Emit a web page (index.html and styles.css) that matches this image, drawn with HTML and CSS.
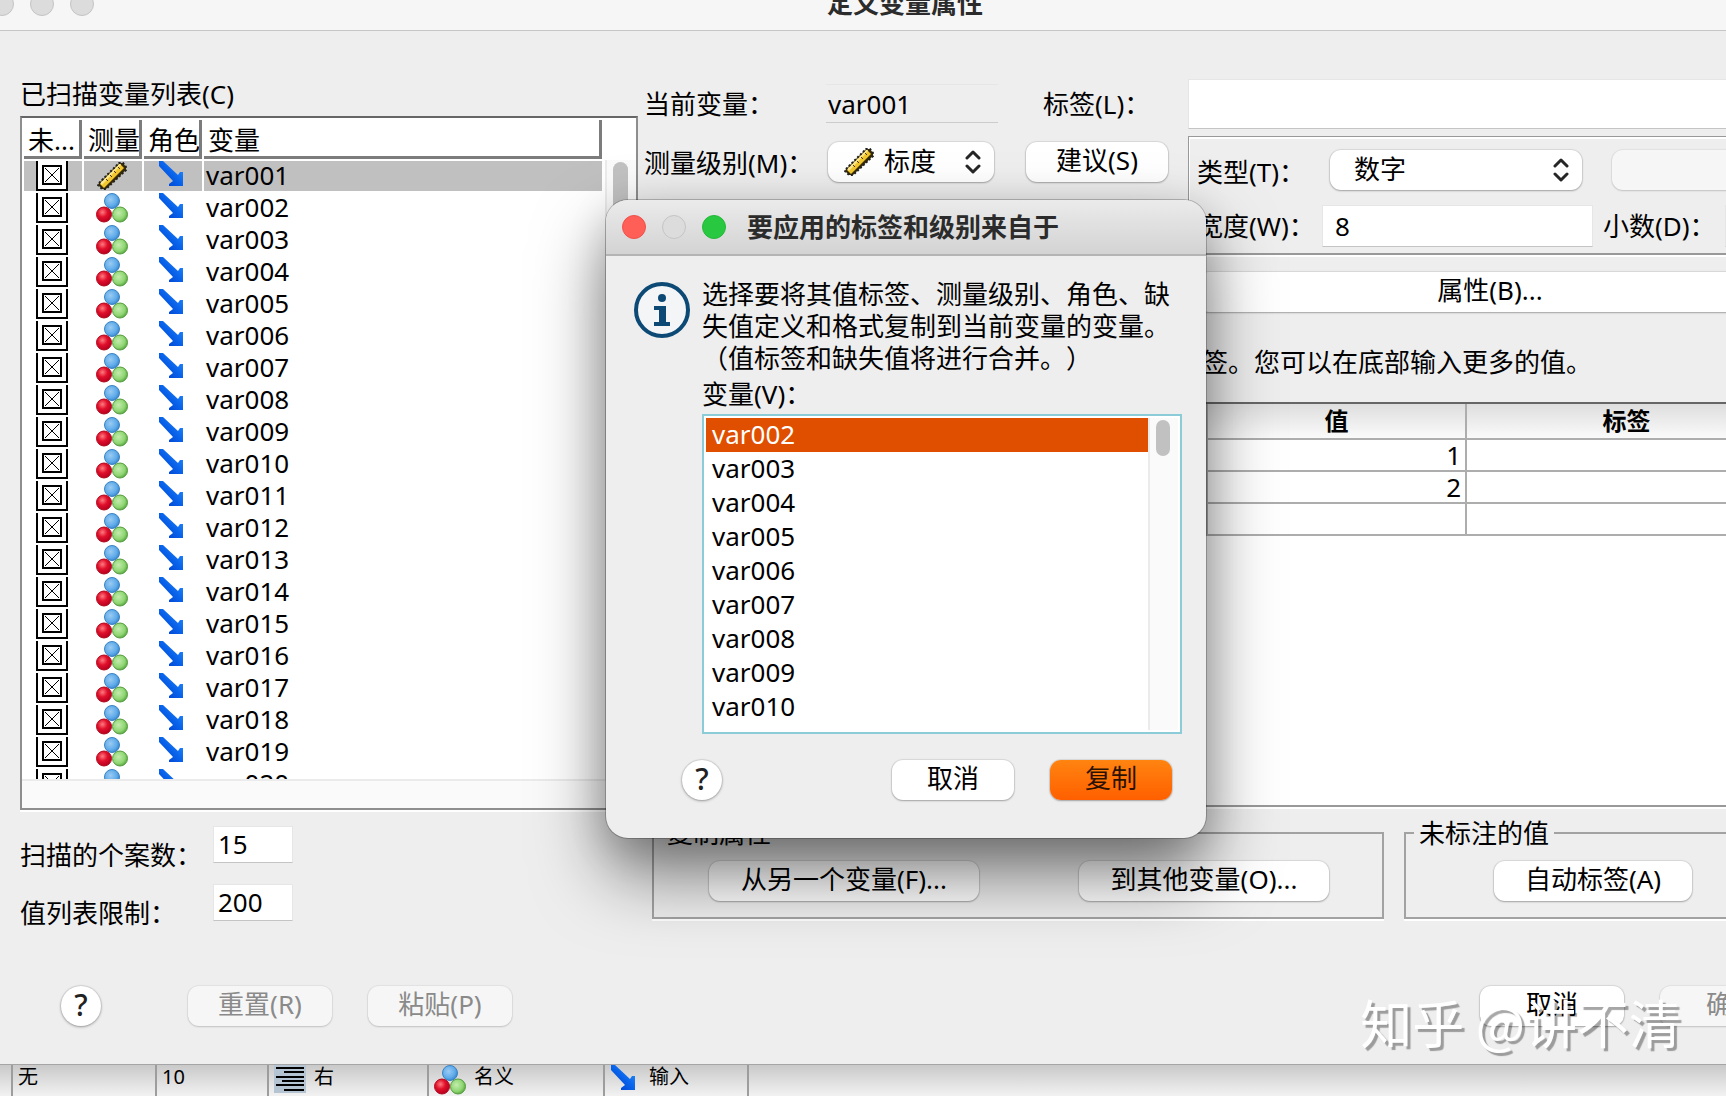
FILE: index.html
```html
<!DOCTYPE html>
<html lang="zh-CN">
<head>
<meta charset="utf-8">
<title>定义变量属性</title>
<link rel="stylesheet" href="styles.css">
</head>
<body>
<svg class="sprites" aria-hidden="true">
  <defs>
    <radialGradient id="blue" cx=".4" cy=".4" r=".6"><stop offset="0" stop-color="#9bcbf3"/><stop offset=".7" stop-color="#5fabea"/><stop offset="1" stop-color="#3d8bd0"/></radialGradient>
    <radialGradient id="red" cx=".4" cy=".35" r=".65"><stop offset="0" stop-color="#ff7a80"/><stop offset=".5" stop-color="#e0102a"/><stop offset="1" stop-color="#b80020"/></radialGradient>
    <radialGradient id="green" cx=".4" cy=".4" r=".6"><stop offset="0" stop-color="#c4ecae"/><stop offset=".7" stop-color="#8fd672"/><stop offset="1" stop-color="#5fae46"/></radialGradient>
    <linearGradient id="shaft" x1="0" y1="1" x2="1" y2="0"><stop offset="0" stop-color="#0038c4"/><stop offset=".5" stop-color="#0862ea"/><stop offset="1" stop-color="#2f95ff"/></linearGradient>
    <symbol id="nominal" viewBox="0 0 32 30">
      <circle cx="16" cy="8" r="7.5" fill="url(#blue)" stroke="#3a83c4"/>
      <circle cx="8" cy="21.500" r="7.500" fill="url(#red)" stroke="#b30a20"/>
      <circle cx="24" cy="21.500" r="7.500" fill="url(#green)" stroke="#569c40"/>
    </symbol>
    <symbol id="arrow" viewBox="0 0 26 26">
      <path d="M1 0h4l15 14 2-3h3v14H11v-2l4-3L1 5z" fill="url(#shaft)"/>
    </symbol>
    <symbol id="ruler" viewBox="0 0 30 30">
      <path d="M2 22 22 2h4l3 4v3L9 28H5l-4-4z" fill="#3a2c00"/>
      <path d="M3 23 23 3l4 4L7 27z" fill="#f2c62e"/>
      <path d="M3 22 23 2l1 2L5 24z" fill="#ffe88a"/>
      <path d="M2 22 22 2h4l3 4v3L9 28H5l-4-4z" fill="none" stroke="#222" stroke-width="2" stroke-dasharray="2 2"/>
      <path d="m9 18 2 2m2-6 2 2m2-6 2 2m2-6 2 2" stroke="#4a3800" stroke-width="1"/>
    </symbol>
    <symbol id="chevrons" viewBox="0 0 18 24">
      <path d="m3 8 6-6 6 6M3 16l6 6 6-6" fill="none" stroke="#262626" stroke-width="3" stroke-linecap="round" stroke-linejoin="round"/>
    </symbol>
  </defs>
</svg>

<main class="window">
  <header class="titlebar">
    <span class="light"></span><span class="light"></span><span class="light"></span>
    <h1 class="titlebar-text">定义变量属性</h1>
  </header>

  <div class="content">
    <section class="scanned">
      <h2 class="label">已扫描变量列表(C)</h2>
      <div class="listbox">
        <div class="listbox-view">
          <div class="listbox-rows">
            <table class="vars">
              <colgroup><col class="col-icon"><col class="col-icon"><col class="col-icon"><col></colgroup>
              <thead><tr><th>未...</th><th>测量</th><th>角色</th><th>变量</th></tr></thead>
              <tbody id="vars"></tbody>
            </table>
          </div>
          <div class="vscroll"><span class="thumb thumb-long"></span></div>
        </div>
        <div class="hscroll"></div>
      </div>
      <div class="limit"><label for="cases">扫描的个案数：</label><input id="cases" class="field" value="15"></div>
      <div class="limit"><label for="limit">值列表限制：</label><input id="limit" class="field" value="200"></div>
    </section>

    <section class="details">
      <div class="details-top">
        <div class="current">
          <div class="row row-name">
            <label class="current-label" for="current">当前变量：</label>
            <input id="current" class="readonly" value="var001" readonly>
            <label for="label">标签(L)：</label>
          </div>
          <div class="row row-level">
            <label class="current-label" for="level">测量级别(M)：</label>
            <div class="dropdown dropdown-level">
              <svg class="dropdown-icon"><use href="#ruler"/></svg>
              <select id="level"><option>标度</option></select>
              <svg class="dropdown-arrows"><use href="#chevrons"/></svg>
            </div>
            <button class="btn btn-m">建议(S)</button>
          </div>
        </div>
        <div class="format-side">
          <input id="label" class="field label-field">
          <div class="format">
            <div class="row">
              <label class="type-label" for="type">类型(T)：</label>
              <div class="dropdown dropdown-type">
                <select id="type"><option>数字</option></select>
                <svg class="dropdown-arrows"><use href="#chevrons"/></svg>
              </div>
              <button class="btn btn-format" disabled aria-label="格式"></button>
            </div>
            <div class="row">
              <label class="width-label" for="width">宽度(W)：</label>
              <input id="width" class="field width-field" value="8">
              <label class="decimals-label" for="decimals">小数(D)：</label>
              <input id="decimals" class="field decimals-field">
            </div>
          </div>
        </div>
      </div>
      <button class="btn btn-attr">属性(B)...</button>
      <p class="hint">签。您可以在底部输入更多的值。</p>
      <div class="values-box">
        <table class="values">
          <colgroup><col class="col-lead"><col class="col-value"><col></colgroup>
          <thead><tr><th></th><th>值</th><th>标签</th></tr></thead>
          <tbody>
            <tr><td></td><td>1</td><td></td></tr>
            <tr><td></td><td>2</td><td></td></tr>
            <tr><td></td><td></td><td></td></tr>
          </tbody>
        </table>
      </div>
      <div class="groups">
        <fieldset class="group group-copy">
          <legend>复制属性</legend>
          <div class="group-row">
            <button class="btn btn-from">从另一个变量(F)...</button>
            <button class="btn btn-to">到其他变量(O)...</button>
          </div>
        </fieldset>
        <fieldset class="group group-auto">
          <legend>未标注的值</legend>
          <div class="group-row">
            <button class="btn btn-auto">自动标签(A)</button>
          </div>
        </fieldset>
      </div>
    </section>
  </div>

  <footer class="actions">
    <button class="help" aria-label="帮助">?</button>
    <button class="btn btn-l" disabled>重置(R)</button>
    <button class="btn btn-l" disabled>粘贴(P)</button>
    <button class="btn btn-l btn-cancel">取消</button>
    <button class="btn btn-l" disabled>确定</button>
  </footer>
</main>

<div class="sheet">
  <span class="cell cell-edge"></span>
  <span class="cell cell-missing">无</span>
  <span class="cell cell-columns">10</span>
  <span class="cell cell-align">
    <svg class="align-icon" viewBox="0 0 32 28"><path fill="#b4c4d2" d="M0 0h32v28H0z"/><path d="M2 3h28M10 7h20M2 12h28M8 16h22M2 20h28M10 25h20" stroke="#000" stroke-width="2"/></svg>右</span>
  <span class="cell cell-measure"><svg class="nominal"><use href="#nominal"/></svg>名义</span>
  <span class="cell cell-role"><svg class="arrow"><use href="#arrow"/></svg>输入</span>
</div>

<div class="dialog" role="dialog" aria-labelledby="dialog-title">
  <header class="dialog-bar">
    <span class="light light-red"></span><span class="light"></span><span class="light light-green"></span>
    <h2 id="dialog-title">要应用的标签和级别来自于</h2>
  </header>
  <div class="dialog-body">
    <svg class="info" viewBox="0 0 56 56">
      <circle cx="28" cy="28" r="26" fill="#f3f5f6" stroke="#0c4a75" stroke-width="4"/>
      <circle cx="28" cy="16" r="4" fill="#0c4a75"/>
      <path d="M20 24h12v16h4v4H20v-4h5V28h-5z" fill="#0c4a75"/>
    </svg>
    <div class="dialog-main">
      <p class="message">选择要将其值标签、测量级别、角色、缺失值定义和格式复制到当前变量的变量。<br>（值标签和缺失值将进行合并。）</p>
      <div class="label" id="source-label">变量(V)：</div>
      <div class="source">
        <ul class="source-list" role="listbox" aria-labelledby="source-label">
          <li role="option" aria-selected="true">var002</li>
          <li role="option">var003</li>
          <li role="option">var004</li>
          <li role="option">var005</li>
          <li role="option">var006</li>
          <li role="option">var007</li>
          <li role="option">var008</li>
          <li role="option">var009</li>
          <li role="option">var010</li>
        </ul>
        <div class="vscroll"><span class="thumb"></span></div>
      </div>
    </div>
  </div>
  <footer class="dialog-actions">
    <button class="help" aria-label="帮助">?</button>
    <button class="btn btn-s btn-push">取消</button>
    <button class="btn btn-s btn-primary">复制</button>
  </footer>
</div>

<div class="watermark">知乎 @讲不清</div>
<script src="vars.js"></script>
</body>
</html>
```

FILE: styles.css
```css
* { box-sizing: border-box; }

body {
  margin: 0;
  height: 100vh;
  display: flex;
  flex-direction: column;
  overflow: hidden;
  position: relative;
  background: #f4f4f4;
  color: #000;
  font: 26px/32px "Noto Sans", "Noto Sans CJK SC", sans-serif;
  text-spacing-trim: space-all;
}

h1, h2, p, ul { margin: 0; padding: 0; font: inherit; }
button, input, select { font: inherit; color: inherit; margin: 0; }
label, .label { white-space: nowrap; }
svg { display: block; flex: none; }
.sprites { position: absolute; width: 0; height: 0; }
.nominal { width: 32px; height: 30px; }
.arrow { width: 26px; height: 26px; }
.ruler { width: 30px; height: 30px; }

/* window frame */
.window {
  flex: 1;
  min-height: 0;
  display: flex;
  flex-direction: column;
  background: #eee;
  border-bottom: 1px solid #a5a5a5;
}
.titlebar {
  flex: none;
  height: 31px;
  display: flex;
  align-items: flex-end;
  gap: 16px;
  margin-left: -10px;
  padding-bottom: 14px;
  background: #f6f6f6;
  border-bottom: 1px solid #c6c6c6;
  overflow: hidden;
}
.titlebar-text {
  flex: 1;
  margin-right: 26px;
  text-align: center;
  font-weight: 700;
  line-height: 26px;
  color: #2b2b2b;
}
.light {
  flex: none;
  width: 24px;
  height: 24px;
  border-radius: 50%;
  background: #dcdcdc;
  border: 1px solid #c4c4c4;
}
.light-red { background: #ff5f57; border-color: #ee5049; }
.light-green { background: #28c840; border-color: #24b83a; }

.content {
  flex: 1;
  min-height: 0;
  display: flex;
  gap: 6px;
  padding: 47px 0 0 20px;
  overflow: hidden;
}

/* scanned variables */
.scanned {
  flex: none;
  width: 618px;
  display: flex;
  flex-direction: column;
}
.scanned .label { margin-bottom: 6px; }
.listbox {
  flex: 1;
  min-height: 0;
  display: flex;
  flex-direction: column;
  background: #fff;
  border: 2px solid #8e8e8e;
  border-top-color: #666;
  box-shadow: 0 2px #fff;
}
.listbox-view { flex: 1; min-height: 0; display: flex; }
.listbox-rows { flex: 1; overflow: hidden; }
.vars {
  width: 582px;
  table-layout: fixed;
  border-spacing: 2px;
}
.col-icon { width: 58px; }
.vars th {
  height: 38px;
  padding: 4px 0 0 4px;
  text-align: left;
  font-weight: 400;
  line-height: 32px;
  white-space: nowrap;
  overflow: hidden;
  border-right: 3px solid #7c7c7c;
  border-bottom: 3px solid #7c7c7c;
}
.vars td { height: 30px; padding: 0 2px 0 0; line-height: 28px; vertical-align: top; }
.vars td:last-child { padding-left: 2px; }
.vars .selected td { background: #c0c0c0; }
.vars td svg { margin: 0 auto; }
.vars td .arrow { margin-left: 14px; }
.tick {
  width: 32px;
  height: 30px;
  margin: 0 auto;
  display: flex;
  align-items: flex-start;
  justify-content: center;
  padding-top: 4px;
  background: #fff;
  border: 2px solid #000;
  border-top: 0;
}
.tick input {
  appearance: none;
  width: 20px;
  height: 20px;
  border: 2px solid #000;
}
.tick input:checked {
  background:
    linear-gradient(45deg, transparent 47%, #000 47%, #000 53%, transparent 53%) center / 14px 14px no-repeat,
    linear-gradient(-45deg, transparent 47%, #000 47%, #000 53%, transparent 53%) center / 14px 14px no-repeat;
}
.vscroll {
  flex: none;
  width: 30px;
  padding: 2px 8px 2px 6px;
  background: #fafafa;
  border-left: 2px solid #ebebeb;
}
.listbox .vscroll { width: 31px; margin-top: 42px; }
.thumb {
  display: block;
  height: 36px;
  border-radius: 8px;
  background: #c1c1c1;
}
.thumb-long { height: 240px; }
.hscroll {
  flex: none;
  height: 29px;
  background: #fafafa;
  border-top: 2px solid #ebebeb;
}
.limit {
  flex: none;
  height: 58px;
  display: flex;
  align-items: center;
  line-height: 30px;
}
.listbox + .limit { margin-top: 16px; }
.limit label { width: 193px; }
.limit .field { width: 80px; height: 37px; align-self: flex-start; padding: 0 4px 2px; }

/* controls */
.field {
  flex: none;
  background: #fff;
  border: 1px solid #e6e6e6;
  border-bottom-color: #c4c4c4;
  padding: 0 12px;
}
.readonly {
  width: 172px;
  height: 39px;
  padding: 0 0 0 2px;
  background: none;
  border: 0;
  border-top: 1px solid #e6e6e6;
  border-bottom: 1px solid #ccc;
}
.btn {
  flex: none;
  height: 40px;
  padding: 0 0 4px;
  border: 0;
  border-radius: 11px;
  background: #fff;
  line-height: 36px;
  text-align: center;
  white-space: nowrap;
  box-shadow: 0 0 1px 1px rgba(0, 0, 0, .09), 0 1px 2px rgba(0, 0, 0, .25);
}
.btn:disabled {
  background: #f6f6f6;
  color: #8a8a8a;
  box-shadow: 0 0 1px 1px rgba(0, 0, 0, .05), 0 1px 2px rgba(0, 0, 0, .14);
}
.btn-s { width: 122px; }
.btn-m { width: 142px; }
.btn-l { width: 144px; }
.btn-primary {
  background: linear-gradient(#ff8410, #ff5f00);
  color: #2b1100;
}
.help {
  flex: none;
  width: 40px;
  height: 40px;
  padding: 0 0 2px;
  border: 0;
  border-radius: 50%;
  background: #fff;
  color: #222;
  font-size: 30px;
  font-weight: 500;
  line-height: 38px;
  box-shadow: 0 0 1px 1px rgba(0, 0, 0, .09), 0 1px 3px rgba(0, 0, 0, .3);
}
.dropdown {
  flex: none;
  display: grid;
  align-items: center;
  height: 40px;
}
.dropdown > * { grid-area: 1 / 1; }
.dropdown select {
  appearance: none;
  width: 100%;
  height: 40px;
  padding: 0 0 3px 24px;
  border: 0;
  border-radius: 11px;
  background: #fff;
  box-shadow: 0 0 1px 1px rgba(0, 0, 0, .09), 0 1px 2px rgba(0, 0, 0, .25);
}
.dropdown svg { z-index: 1; pointer-events: none; }
.dropdown-arrows { width: 18px; height: 24px; justify-self: end; margin-right: 12px; }
.dropdown-icon { width: 30px; height: 30px; margin-left: 16px; }
.dropdown-level { width: 166px; }
.dropdown-level select { padding-left: 56px; }
.dropdown-type { width: 252px; }

/* variable details: wider than the visible window */
.details {
  flex: 1;
  min-width: 0;
  margin-right: -64px;
  padding-top: 1px;
  display: flex;
  flex-direction: column;
}
.row { display: flex; align-items: center; }
.details-top { flex: none; display: flex; }
.current { flex: none; width: 544px; padding-top: 5px; }
.row-level { margin-top: 19px; }
.current-label { flex: none; width: 182px; }
.readonly + label { margin-left: 45px; }
.row-level .current-label { width: 184px; padding-top: 2px; }
.row-level .btn { margin-left: 32px; }
.format-side { flex: 1; min-width: 0; }
.label-field { display: block; width: 100%; height: 50px; }
.format {
  height: 119px;
  margin-top: 7px;
  padding: 13px 0 0 8px;
  display: flex;
  flex-direction: column;
  gap: 15px;
  border: 1px solid #999;
  border-bottom-width: 2px;
  box-shadow: inset 0 2px #fff, inset 1px 0 #fff, 0 2px #fff;
}
.type-label { flex: none; width: 133px; padding-top: 4px; }
.width-label { flex: none; width: 125px; }
.btn-format { flex: 1; margin-left: 30px; }
.width-field { width: 271px; height: 42px; }
.decimals-label { flex: none; width: 122px; margin-left: 10px; }
.decimals-field { flex: 1; min-width: 0; height: 42px; }
.btn-attr { margin: 17px 8px 0 554px; }
.hint { flex: none; margin: 34px 0 24px; padding-left: 558px; white-space: nowrap; }

.values-box {
  flex: 1;
  min-height: 0;
  overflow: hidden;
  background: #fff;
  border: 2px solid #999;
  border-top-color: #666;
  box-shadow: 0 2px #fff;
}
.values {
  width: 100%;
  table-layout: fixed;
  border-collapse: collapse;
}
.col-lead { width: 561px; }
.col-value { width: 259px; }
.values th, .values td {
  padding: 0;
  height: 32px;
  line-height: 28px;
  border-right: 2px solid #adadad;
  border-bottom: 2px solid #adadad;
}
.values th {
  height: 35px;
  font-size: 24px;
  font-weight: 700;
  background: linear-gradient(#dedede, #fafafa);
}
.values td { text-align: right; padding-right: 4px; }

.groups { flex: none; display: flex; gap: 20px; margin: 14px 0 23px; }
.group {
  flex: none;
  height: 98px;
  margin: 0;
  min-width: 0;
  padding: 0;
  border: 2px solid #a2a2a2;
  box-shadow: 0 2px #fff;
}
.group legend { height: 24px; line-height: 24px; margin-left: 8px; padding: 0 5px; }
.group-copy { width: 732px; margin-left: 8px; }
.group-auto { flex: 1; }
.group-row { display: flex; justify-content: space-between; padding: 16px 53px 0 55px; }
.group-auto .group-row { padding-left: 88px; }
.btn-from { width: 270px; }
.btn-to { width: 250px; }
.btn-auto { width: 198px; }

.actions {
  flex: none;
  display: flex;
  gap: 36px;
  padding: 44px 0 38px 61px;
  margin-right: -78px;
}
.actions .help { margin-right: 51px; }
.btn-cancel { margin-left: auto; }

/* data sheet behind the window, in its shadow */
.sheet {
  flex: none;
  height: 31px;
  display: flex;
  overflow: hidden;
  font-size: 20px;
  line-height: 24px;
  background: linear-gradient(#c9c9c9, #f2f2f2);
}
.cell {
  flex: none;
  display: flex;
  gap: 8px;
  padding-left: 5px;
  border-right: 2px solid #9d9d9d;
}
.cell-edge { width: 13px; }
.cell-missing { width: 144px; }
.cell-columns { width: 112px; }
.cell-align { width: 160px; }
.cell-measure { width: 176px; }
.cell-role { width: 144px; gap: 13px; }
.align-icon { width: 32px; height: 28px; }

/* dialog */
.dialog {
  position: absolute;
  z-index: 2;
  left: 606px;
  top: 200px;
  width: 600px;
  background: #eee;
  border-radius: 22px;
  overflow: hidden;
  box-shadow: 0 0 0 1px rgba(0, 0, 0, .22), 0 36px 70px rgba(0, 0, 0, .5), 0 10px 40px rgba(0, 0, 0, .14);
}
.dialog-bar {
  height: 56px;
  display: flex;
  align-items: center;
  gap: 16px;
  padding-left: 16px;
  background: linear-gradient(#ebebeb, #d3d3d3);
  border-bottom: 2px solid #b4b4b4;
}
.dialog-bar h2 { margin-left: 5px; font-weight: 700; color: #2b2b2b; }
.dialog-body { display: flex; gap: 12px; padding: 22px 24px 0 28px; }
.info { width: 56px; height: 56px; margin-top: 4px; }
.message { width: 470px; }
.dialog-main { flex: 1; min-width: 0; }
.dialog-main .label { margin: 4px 0; }
.source {
  height: 320px;
  display: flex;
  padding: 2px;
  background: #fff;
  border: 2px solid #8ccbd8;
}
.source-list { flex: 1; list-style: none; overflow: hidden; }
.source-list li { padding: 0 0 2px 6px; }
.source-list [aria-selected] { background: #e04e00; color: #fff; }
.dialog-actions {
  display: flex;
  padding: 26px 34px 38px 76px;
}
.btn-push { margin-left: auto; margin-right: 36px; }

.watermark {
  position: absolute;
  z-index: 3;
  right: 45px;
  bottom: 48px;
  font: 52px/52px "Noto Sans CJK SC", sans-serif;
  color: #fff;
  text-shadow: 3px 3px 1px rgba(0, 0, 0, .35);
  white-space: nowrap;
  pointer-events: none;
}
```

FILE: vars.js
```js
const body = document.getElementById('vars');
for (let i = 1; i <= 20; i++) {
  const name = 'var' + String(i).padStart(3, '0');
  const measure = i === 1 ? 'ruler' : 'nominal';
  const row = body.insertRow();
  if (i === 1) row.className = 'selected';
  row.innerHTML =
    `<td><div class="tick"><input type="checkbox" checked aria-label="${name}"></div></td>` +
    `<td><svg class="${measure}"><use href="#${measure}"/></svg></td>` +
    `<td><svg class="arrow"><use href="#arrow"/></svg></td>` +
    `<td>${name}</td>`;
}
```
